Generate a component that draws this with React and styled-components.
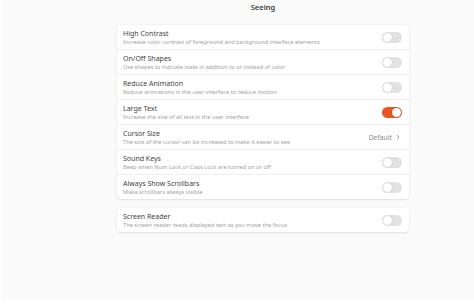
import React from 'react';
import styled, { createGlobalStyle } from 'styled-components';

const Global = createGlobalStyle`
  html, body {
    margin: 0;
    padding: 0;
    background: #ffffff;
  }
  body {
    font-family: "Noto Sans", "DejaVu Sans", sans-serif;
  }
`;

const Window = styled.main`
  margin-left: 2px;
  width: 472px;
  height: 300px;
  background: #fafafa;
  display: flex;
  flex-direction: column;
  align-items: flex-start;
`;

const Column = styled.div`
  margin-left: 115px;
  width: 292px;
  display: flex;
  flex-direction: column;
  gap: 9px;
`;

const Title = styled.h1`
  margin: 0;
  height: 16px;
  line-height: 15px;
  font-size: 7.5px;
  font-weight: 600;
  color: #3b3b3b;
  text-align: center;
`;

const Card = styled.section`
  background: #ffffff;
  border-radius: 4px;
  box-shadow: 0 0 0 0.5px rgba(0, 0, 0, 0.05), 0 1px 2px rgba(0, 0, 0, 0.08);
  display: flex;
  flex-direction: column;
`;

const Row = styled.div`
  height: 24px;
  padding: 0 5px 0 6px;
  display: flex;
  align-items: center;
  justify-content: space-between;
  & + & {
    border-top: 1px solid #efefef;
  }
`;

const Text = styled.div`
  display: flex;
  flex-direction: column;
  gap: 1px;
`;

const Label = styled.span`
  font-size: 7px;
  line-height: 9px;
  color: #444444;
`;

const Hint = styled.span`
  font-size: 5.7px;
  line-height: 7px;
  color: #a3a3a3;
`;

const Value = styled.span`
  font-size: 6.8px;
  color: #8c8c8c;
  display: flex;
  align-items: center;
  gap: 4px;
  margin-right: 4px;
`;

const Switch = styled.span`
  width: 20px;
  height: 11px;
  border-radius: 6px;
  background: ${p => (p.on ? '#e95420' : '#e2e2e2')};
  display: flex;
  align-items: center;
  justify-content: ${p => (p.on ? 'flex-end' : 'flex-start')};
  padding: 0 1px;
  box-sizing: border-box;
  flex-shrink: 0;
  margin-right: 2px;
  &::after {
    content: '';
    width: 9px;
    height: 9px;
    border-radius: 50%;
    background: #ffffff;
    box-shadow: 0 0 1px rgba(0, 0, 0, 0.25);
  }
`;

const Chevron = () => (
  <svg width="4" height="6" viewBox="0 0 4 6" fill="none">
    <path d="M1 0.8 L3 3 L1 5.2" stroke="#8c8c8c" strokeWidth="0.8" />
  </svg>
);

const seeing = [
  { label: 'High Contrast', hint: 'Increase color contrast of foreground and background interface elements' },
  { label: 'On/Off Shapes', hint: 'Use shapes to indicate state in addition to or instead of color' },
  { label: 'Reduce Animation', hint: 'Reduce animations in the user interface to reduce motion' },
  { label: 'Large Text', hint: 'Increase the size of all text in the user interface', on: true },
  { label: 'Cursor Size', hint: 'The size of the cursor can be increased to make it easier to see', value: 'Default' },
  { label: 'Sound Keys', hint: 'Beep when Num Lock or Caps Lock are turned on or off' },
  { label: 'Always Show Scrollbars', hint: 'Make scrollbars always visible' },
];

const reader = [
  { label: 'Screen Reader', hint: 'The screen reader reads displayed text as you move the focus' },
];

function Setting({ item }) {
  return (
    <Row>
      <Text>
        <Label>{item.label}</Label>
        <Hint>{item.hint}</Hint>
      </Text>
      {item.value ? (
        <Value>
          {item.value}
          <Chevron />
        </Value>
      ) : (
        <Switch on={item.on ? 1 : 0} />
      )}
    </Row>
  );
}

export default function App() {
  return (
    <>
      <Global />
      <Window>
        <Column>
          <Title>Seeing</Title>
          <Card>
            {seeing.map(item => <Setting key={item.label} item={item} />)}
          </Card>
          <Card>
            {reader.map(item => <Setting key={item.label} item={item} />)}
          </Card>
        </Column>
      </Window>
    </>
  );
}
